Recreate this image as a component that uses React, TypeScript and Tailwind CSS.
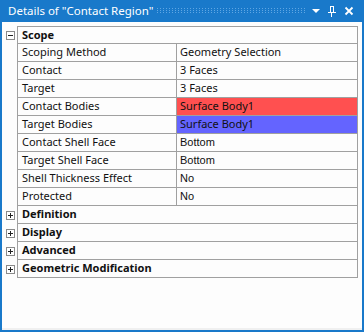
import React from "react";

type Row =
  | { kind: "head"; label: string; open: boolean }
  | { kind: "prop"; label: string; value: string; bg?: string; legacy?: boolean };

const rows: Row[] = [
  { kind: "head", label: "Scope", open: true },
  { kind: "prop", label: "Scoping Method", value: "Geometry Selection" },
  { kind: "prop", label: "Contact", value: "3 Faces" },
  { kind: "prop", label: "Target", value: "3 Faces" },
  { kind: "prop", label: "Contact Bodies", value: "Surface Body1", bg: "red" },
  { kind: "prop", label: "Target Bodies", value: "Surface Body1", bg: "blue" },
  { kind: "prop", label: "Contact Shell Face", value: "Bottom", legacy: true },
  { kind: "prop", label: "Target Shell Face", value: "Bottom", legacy: true },
  { kind: "prop", label: "Shell Thickness Effect", value: "No", legacy: true },
  { kind: "prop", label: "Protected", value: "No", legacy: true },
  { kind: "head", label: "Definition", open: false },
  { kind: "head", label: "Display", open: false },
  { kind: "head", label: "Advanced", open: false },
  { kind: "head", label: "Geometric Modification", open: false },
];

function ExpandBox({ open }: { open: boolean }) {
  return (
    <svg width="9" height="9" viewBox="0 0 9 9" className="block">
      <rect x="0.5" y="0.5" width="8" height="8" fill="#fff" stroke="#8a8a8a" />
      <rect x="2" y="4" width="5" height="1" fill="#222" />
      {!open && <rect x="4" y="2" width="1" height="5" fill="#222" />}
    </svg>
  );
}

export default function App() {
  return (
    <div className="w-[364px] h-[332px] bg-[#1979ca] flex flex-col px-[2px] pb-[2px] font-['Noto_Sans','Open_Sans',sans-serif]">
      <div className="h-[22px] flex items-center pl-[6px] pr-[8px] text-white">
        <span className="text-[11.5px] leading-none whitespace-nowrap">
          Details of "Contact Region"
        </span>
        <svg className="flex-1 mx-[4px] h-[6px]" height="6">
          <defs>
            <pattern id="dots" width="3" height="2" patternUnits="userSpaceOnUse">
              <rect x="0" y="0" width="1" height="1" fill="#5fa6e3" />
            </pattern>
          </defs>
          <rect x="0" y="0" width="100%" height="6" fill="url(#dots)" />
        </svg>
        <svg width="10" height="10" viewBox="0 0 10 10" className="mr-[6px]">
          <polygon points="1,3 9,3 5,7" fill="#fff" />
        </svg>
        <svg width="10" height="12" viewBox="0 0 10 12" className="mr-[7px]">
          <rect x="3" y="1" width="1" height="7" fill="#fff" />
          <rect x="6" y="1" width="1" height="7" fill="#fff" />
          <rect x="3" y="1" width="4" height="1" fill="#fff" />
          <rect x="1" y="7" width="8" height="1" fill="#fff" />
          <rect x="4" y="8" width="1" height="4" fill="#fff" />
        </svg>
        <svg width="10" height="10" viewBox="0 0 10 10">
          <path d="M1.5 1.5 L8.5 8.5 M8.5 1.5 L1.5 8.5" stroke="#fff" strokeWidth="1.8" />
        </svg>
      </div>
      <div className="flex-1 bg-[#fdfdfd] pt-[4px] pr-[4px] flex flex-col border-b-[2px] border-[#f0f0f0]">
        {rows.map((r, i) => (
          <div key={i} className="flex h-[18px] shrink-0">
            <div className="w-[15px] flex items-center pl-[4px]">
              {r.kind === "head" && <ExpandBox open={r.open} />}
            </div>
            <div
              className={
                "flex-1 flex border-l border-r border-b border-[#a0a0a0] text-[11px] text-[#111] h-[18px] " +
                (i === 0 ? "border-t" : "")
              }
            >
              {r.kind === "head" ? (
                <div className="flex items-center pl-[4px] font-bold">{r.label}</div>
              ) : (
                <>
                  <div className="w-[159px] flex items-center pl-[4px] border-r border-[#a0a0a0] whitespace-nowrap">
                    {r.label}
                  </div>
                  <div
                    className={
                      "flex-1 flex items-center pl-[3px] whitespace-nowrap " +
                      (r.bg === "red" ? "bg-[#ff5050]" : r.bg === "blue" ? "bg-[#6464ff]" : "")
                    }
                  >
                    {r.legacy ? (
                      <span className="text-[11px] font-['Liberation_Sans',Arial,sans-serif]">
                        {r.value}
                      </span>
                    ) : (
                      r.value
                    )}
                  </div>
                </>
              )}
            </div>
          </div>
        ))}
      </div>
    </div>
  );
}
